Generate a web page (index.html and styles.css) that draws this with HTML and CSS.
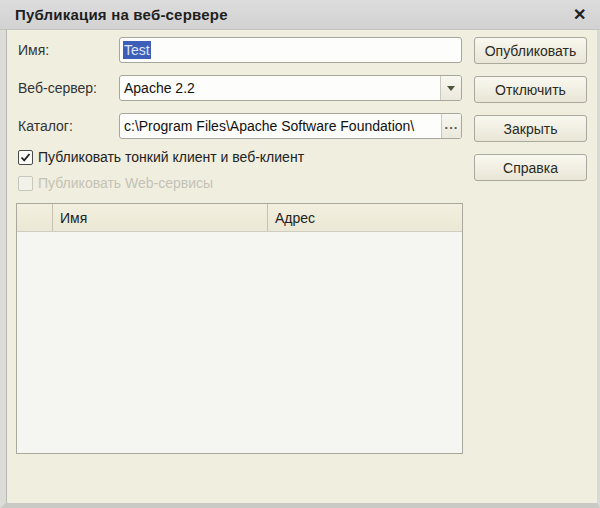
FILE: index.html
```html
<!DOCTYPE html>
<html lang="ru">

<head>
    <meta charset="UTF-8">
    <title>Публикация на веб-сервере</title>
    <link rel="stylesheet" href="styles.css">
</head>

<body>
    <div class="window">
        <div class="titlebar">
            <span class="title">Публикация на веб-сервере</span>
            <span class="close">&#x2715;</span>
        </div>

        <div class="body">
            <div class="main">
                <div class="row">
                    <span class="label">Имя:</span>
                    <div class="field"><span class="selected">Test</span></div>
                </div>
                <div class="row">
                    <span class="label">Веб-сервер:</span>
                    <div class="field">
                        <span class="value">Apache 2.2</span>
                        <span class="side-btn"><span class="arrow"></span></span>
                    </div>
                </div>
                <div class="row">
                    <span class="label">Каталог:</span>
                    <div class="field">
                        <span class="value">c:\Program Files\Apache Software Foundation\</span>
                        <span class="side-btn dots">...</span>
                    </div>
                </div>

                <label class="check">
                    <span class="box checked">
                        <svg width="11" height="11" viewBox="0 0 11 11"><path d="M1.5 5.5 L4.2 8.3 L9.5 2" fill="none" stroke="#222" stroke-width="1.8"/></svg>
                    </span>
                    Публиковать тонкий клиент и веб-клиент
                </label>
                <label class="check disabled">
                    <span class="box"></span>
                    Публиковать Web-сервисы
                </label>

                <div class="table">
                    <div class="thead">
                        <div class="th th-mark"></div>
                        <div class="th th-name">Имя</div>
                        <div class="th th-addr">Адрес</div>
                    </div>
                    <div class="tbody"></div>
                </div>
            </div>

            <div class="buttons">
                <button class="btn">Опубликовать</button>
                <button class="btn">Отключить</button>
                <button class="btn">Закрыть</button>
                <button class="btn">Справка</button>
            </div>
        </div>
    </div>
</body>

</html>
```

FILE: styles.css
```css
html,
body {
    margin: 0;
    height: 100%;
    width: 100%;
    overflow: hidden;
}

body {
    font-family: "Liberation Sans", Arial, sans-serif;
    font-size: 13px;
    color: #222;
    background-color: #f0eedf;
}

.window {
    box-sizing: border-box;
    width: 600px;
    height: 508px;
    display: flex;
    flex-direction: column;
    border-left: 6px solid #dcdcd8;
    border-right: 3px solid #d9d9d5;
    border-bottom: 5px solid #c9c9c5;
    background-color: #f0eedf;
}

.titlebar {
    height: 30px;
    margin-left: -6px;
    margin-right: -3px;
    padding: 0 14px 0 15px;
    display: flex;
    align-items: center;
    justify-content: space-between;
    background: linear-gradient(#dcdcdc, #d2d2d2);
    border-bottom: 1px solid #c4c4bf;
    box-sizing: border-box;
}

.title {
    font-weight: bold;
    font-size: 15px;
    color: #1e1e1e;
    letter-spacing: 0.2px;
}

.close {
    font-size: 16px;
    font-weight: bold;
    color: #222;
}

.body {
    flex: 1;
    display: flex;
    padding: 7px 0 0 9px;
    gap: 11px;
    border-left: 1px solid #b8b8b2;
}

.main {
    width: 447px;
    display: flex;
    flex-direction: column;
}

.row {
    display: flex;
    align-items: center;
    height: 26px;
    margin-bottom: 12px;
}

.label {
    width: 103px;
    padding-left: 2px;
    box-sizing: border-box;
    font-size: 14px;
    color: #333;
}

.field {
    flex: 1;
    height: 26px;
    box-sizing: border-box;
    display: flex;
    align-items: center;
    border: 1px solid #a6a69c;
    border-radius: 3px;
    background-color: #fdfdfb;
    overflow: hidden;
    margin-right: 1px;
}

.selected {
    margin-left: 3px;
    padding: 1px 1px;
    background-color: #3d5fb8;
    color: #dfe6f7;
    font-size: 14px;
}

.value {
    flex: 1;
    padding-left: 4px;
    white-space: nowrap;
    font-size: 14px;
    color: #111;
}

.side-btn {
    width: 20px;
    height: 24px;
    flex-shrink: 0;
    display: flex;
    align-items: center;
    justify-content: center;
    border-left: 1px solid #c8c8c0;
    background: linear-gradient(#f8f7f0, #ebe9dc);
}

.arrow {
    width: 0;
    height: 0;
    border: 4px solid transparent;
    border-top: 5px solid #4c5638;
    border-bottom: none;
}

.dots {
    font-weight: bold;
    color: #555;
    letter-spacing: 1px;
    padding-bottom: 3px;
    box-sizing: border-box;
}

.check {
    display: flex;
    align-items: center;
    gap: 5px;
    height: 18px;
    margin-left: 2px;
    font-size: 14px;
    color: #222;
}

.check:first-of-type {
    margin-top: -3px;
}

.check + .check {
    margin-top: 8px;
}

.check.disabled {
    color: #c4c2b6;
}

.box {
    width: 13px;
    height: 13px;
    border: 1px solid #c9c7bb;
    border-radius: 2px;
    background-color: #f3f2ea;
    display: flex;
    align-items: center;
    justify-content: center;
}

.box.checked {
    border-color: #4a4a4a;
    background-color: #fbfbf8;
}

.table {
    margin-top: 11px;
    height: 251px;
    box-sizing: border-box;
    border: 1px solid #a8a89e;
    display: flex;
    flex-direction: column;
    background-color: #f5f5f1;
}

.thead {
    height: 27px;
    display: flex;
    background: linear-gradient(#f2efdf, #ebe8d5);
    border-bottom: 1px solid #cfcdbf;
}

.th {
    display: flex;
    align-items: center;
    padding-left: 7px;
    font-size: 14px;
    color: #222;
    border-right: 1px solid #c4c2b4;
}

.th-mark {
    width: 35px;
    padding: 0;
}

.th-name {
    width: 207px;
}

.th-addr {
    flex: 1;
    border-right: none;
}

.tbody {
    flex: 1;
}

.buttons {
    width: 113px;
    display: flex;
    flex-direction: column;
    gap: 12px;
}

.btn {
    height: 27px;
    font-family: "Liberation Sans", Arial, sans-serif;
    font-size: 14px;
    color: #2a2a22;
    border: 1px solid #a9a89c;
    border-radius: 3px;
    background: linear-gradient(#f9f8f0, #e9e6d6);
    padding: 0;
}
```
